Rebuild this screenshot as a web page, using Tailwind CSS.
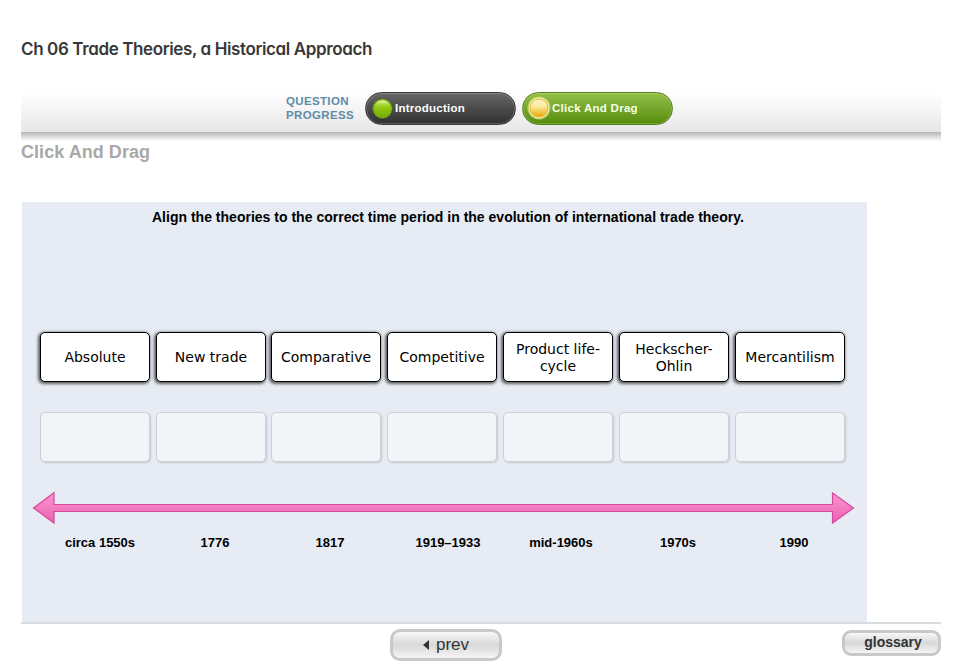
<!DOCTYPE html>
<html lang="en">

<head>
    <meta charset="UTF-8">
    <meta name="viewport" content="width=device-width, initial-scale=1.0">
    <title>Ch 06 Trade Theories, a Historical Approach</title>
    <script src="https://cdn.jsdelivr.net/npm/@tailwindcss/browser@4"></script>
</head>

<body class="h-[672px] overflow-hidden bg-white pl-[21px] font-['Liberation_Sans',Arial,sans-serif]">

    <!-- Page title -->
    <h1 class="h-[92px] pt-[37px] font-[Inter,sans-serif] text-[17px] leading-6 font-semibold tracking-[-0.38px] text-[#383838] [font-feature-settings:'cv11'] whitespace-nowrap">Ch 06 Trade Theories, a Historical Approach</h1>

    <!-- Progress bar -->
    <div class="flex h-10 w-[920px] bg-linear-to-b from-white to-[#e7e7e7] pl-[265px]">
        <div class="w-[79px] pt-[2px] text-[11.5px] leading-[14px] font-bold tracking-[0.35px] text-[#5f8ba8]">QUESTION<br>PROGRESS</div>
        <div class="flex h-[33px] w-[151px] items-center rounded-full border border-[#383838] bg-linear-to-b from-[#686868] to-[#303030] pb-px pl-[6px] text-[11.5px] font-bold tracking-[0.25px] text-white inset-ring inset-ring-white/20">
            <svg class="mr-[2px]" width="21" height="21" viewBox="0 0 21 21">
                <defs>
                    <linearGradient id="green" x1="0" y1="0" x2="0" y2="1">
                        <stop offset="0" stop-color="#f2fbdc" />
                        <stop offset=".22" stop-color="#b4de48" />
                        <stop offset=".4" stop-color="#96cc14" />
                        <stop offset="1" stop-color="#72ad00" />
                    </linearGradient>
                </defs>
                <circle cx="10.5" cy="10.5" r="9.8" fill="#b4dc5a" stroke="#426900" stroke-width=".9" />
                <circle cx="10.5" cy="10.5" r="8.6" fill="url(#green)" stroke="#6b9c08" stroke-width=".7" />
            </svg>
            <span class="pt-[2px]">Introduction</span>
        </div>
        <div class="ml-[6px] flex h-[33px] w-[151px] items-center rounded-full border border-[#527f17] bg-linear-to-b from-[#94c047] to-[#568c07] pb-px pl-[4px] text-[11.5px] font-bold tracking-[0.28px] text-[#f4ffe4] inset-ring inset-ring-white/20">
            <svg class="mr-[1px]" width="24" height="24" viewBox="0 0 24 24">
                <defs>
                    <linearGradient id="yellow" x1="0" y1="0" x2="0" y2="1">
                        <stop offset="0" stop-color="#fff6cc" />
                        <stop offset=".4" stop-color="#fbeaa0" />
                        <stop offset="1" stop-color="#e8a800" />
                    </linearGradient>
                </defs>
                <circle cx="12" cy="12" r="11.6" fill="#f4f291" fill-opacity=".5" />
                <circle cx="12" cy="12" r="10.4" fill="#f7f5ac" />
                <circle cx="12" cy="12" r="9" fill="url(#yellow)" stroke="#dfae2c" stroke-width=".9" />
            </svg>
            <span class="pt-[2px]">Click And Drag</span>
        </div>
    </div>
    <div class="h-[9px] w-[920px] bg-linear-to-b from-[#b5b5b2] to-white"></div>

    <h2 class="h-[61px] text-[18px] leading-[22px] font-bold tracking-[0.05px] text-[#a8a8a8]">Click And Drag</h2>

    <!-- Activity -->
    <div class="ml-px h-[420px] w-[845px] bg-[#e7ecf4]">
        <p class="h-[130px] pt-[5px] pl-[130px] text-[14px] leading-5 font-bold tracking-[0.01px] text-black">Align the theories to the correct time period in the evolution of international trade theory.</p>

        <!-- Theory cards -->
        <div class="ml-[18px] grid w-[811px] grid-cols-[116px_115px_116px_116px_116px_116px_116px] text-center font-['DejaVu_Sans',Verdana,sans-serif] text-[14px] leading-[17px] text-black">
            <div class="flex h-[50px] w-[110px] items-center justify-center rounded-[5px] border border-black bg-white pt-px shadow-[-1px_1px_3px_1px_#00000099]">Absolute</div>
            <div class="flex h-[50px] w-[110px] items-center justify-center rounded-[5px] border border-black bg-white pt-px shadow-[-1px_1px_3px_1px_#00000099]">New trade</div>
            <div class="flex h-[50px] w-[110px] items-center justify-center rounded-[5px] border border-black bg-white pt-px shadow-[-1px_1px_3px_1px_#00000099]">Comparative</div>
            <div class="flex h-[50px] w-[110px] items-center justify-center rounded-[5px] border border-black bg-white pt-px shadow-[-1px_1px_3px_1px_#00000099]">Competitive</div>
            <div class="flex h-[50px] w-[110px] items-center justify-center rounded-[5px] border border-black bg-white pt-px shadow-[-1px_1px_3px_1px_#00000099]">Product life-<br>cycle</div>
            <div class="flex h-[50px] w-[110px] items-center justify-center rounded-[5px] border border-black bg-white pt-px shadow-[-1px_1px_3px_1px_#00000099]">Heckscher-<br>Ohlin</div>
            <div class="flex h-[50px] w-[110px] items-center justify-center rounded-[5px] border border-black bg-white pt-px shadow-[-1px_1px_3px_1px_#00000099]">Mercantilism</div>
        </div>

        <!-- Drop targets -->
        <div class="mt-[30px] ml-[18px] grid w-[811px] grid-cols-[116px_115px_116px_116px_116px_116px_116px]">
            <div class="h-[50px] w-[110px] rounded-[5px] border border-[#cdd1d3] bg-[#f1f5f8] shadow-[1px_1px_2px_#00000026]"></div>
            <div class="h-[50px] w-[110px] rounded-[5px] border border-[#cdd1d3] bg-[#f1f5f8] shadow-[1px_1px_2px_#00000026]"></div>
            <div class="h-[50px] w-[110px] rounded-[5px] border border-[#cdd1d3] bg-[#f1f5f8] shadow-[1px_1px_2px_#00000026]"></div>
            <div class="h-[50px] w-[110px] rounded-[5px] border border-[#cdd1d3] bg-[#f1f5f8] shadow-[1px_1px_2px_#00000026]"></div>
            <div class="h-[50px] w-[110px] rounded-[5px] border border-[#cdd1d3] bg-[#f1f5f8] shadow-[1px_1px_2px_#00000026]"></div>
            <div class="h-[50px] w-[110px] rounded-[5px] border border-[#cdd1d3] bg-[#f1f5f8] shadow-[1px_1px_2px_#00000026]"></div>
            <div class="h-[50px] w-[110px] rounded-[5px] border border-[#cdd1d3] bg-[#f1f5f8] shadow-[1px_1px_2px_#00000026]"></div>
        </div>

        <!-- Timeline arrow -->
        <svg class="mt-[29px] ml-[10px] block" width="824" height="34" viewBox="0 0 824 34">
            <defs>
                <linearGradient id="pink" x1="0" y1="0" x2="0" y2="1">
                    <stop offset="0" stop-color="#fb96d0" />
                    <stop offset="1" stop-color="#ea62b2" />
                </linearGradient>
            </defs>
            <path d="M1.5 17 L22 1.8 V13.5 H800.5 V1.8 L821.5 17 L800.5 32 V20.5 H22 V32 Z" fill="url(#pink)" stroke="#d8489c" stroke-width="1.2" />
        </svg>

        <!-- Time periods -->
        <div class="ml-5 flex pt-2 text-center text-[13px] leading-[20px] font-bold text-black">
            <span class="w-[116px]">circa 1550s</span>
            <span class="w-[114px]">1776</span>
            <span class="w-[116px]">1817</span>
            <span class="w-[120px]">1919–1933</span>
            <span class="w-[106px]">mid-1960s</span>
            <span class="w-[128px]">1970s</span>
            <span class="w-[104px]">1990</span>
        </div>
    </div>

    <!-- Footer -->
    <div class="flex w-[920px] items-start border-t-2 border-[#d8dbdd]">
        <button class="mt-[5px] ml-[369px] flex h-8 w-28 items-center justify-center rounded-[10px] border-3 border-[#c9c9c9] bg-linear-to-b from-[#f8f8f8] via-[#d8d8d8] to-[#f6f6f6] text-[17px] text-[#333]">
            <svg class="mr-[7px]" width="6" height="10" viewBox="0 0 6 10"><path d="M6 0 V10 L0 5 Z" fill="#333" /></svg>
            prev
        </button>
        <button class="mt-[6px] ml-auto flex h-[26px] w-[99px] items-center justify-center rounded-[9px] border-3 border-[#c9c9c9] bg-linear-to-b from-[#f8f8f8] via-[#d8d8d8] to-[#f6f6f6] pb-px pl-[3px] text-[14px] font-bold text-[#333]">glossary</button>
    </div>

</body>

</html>
